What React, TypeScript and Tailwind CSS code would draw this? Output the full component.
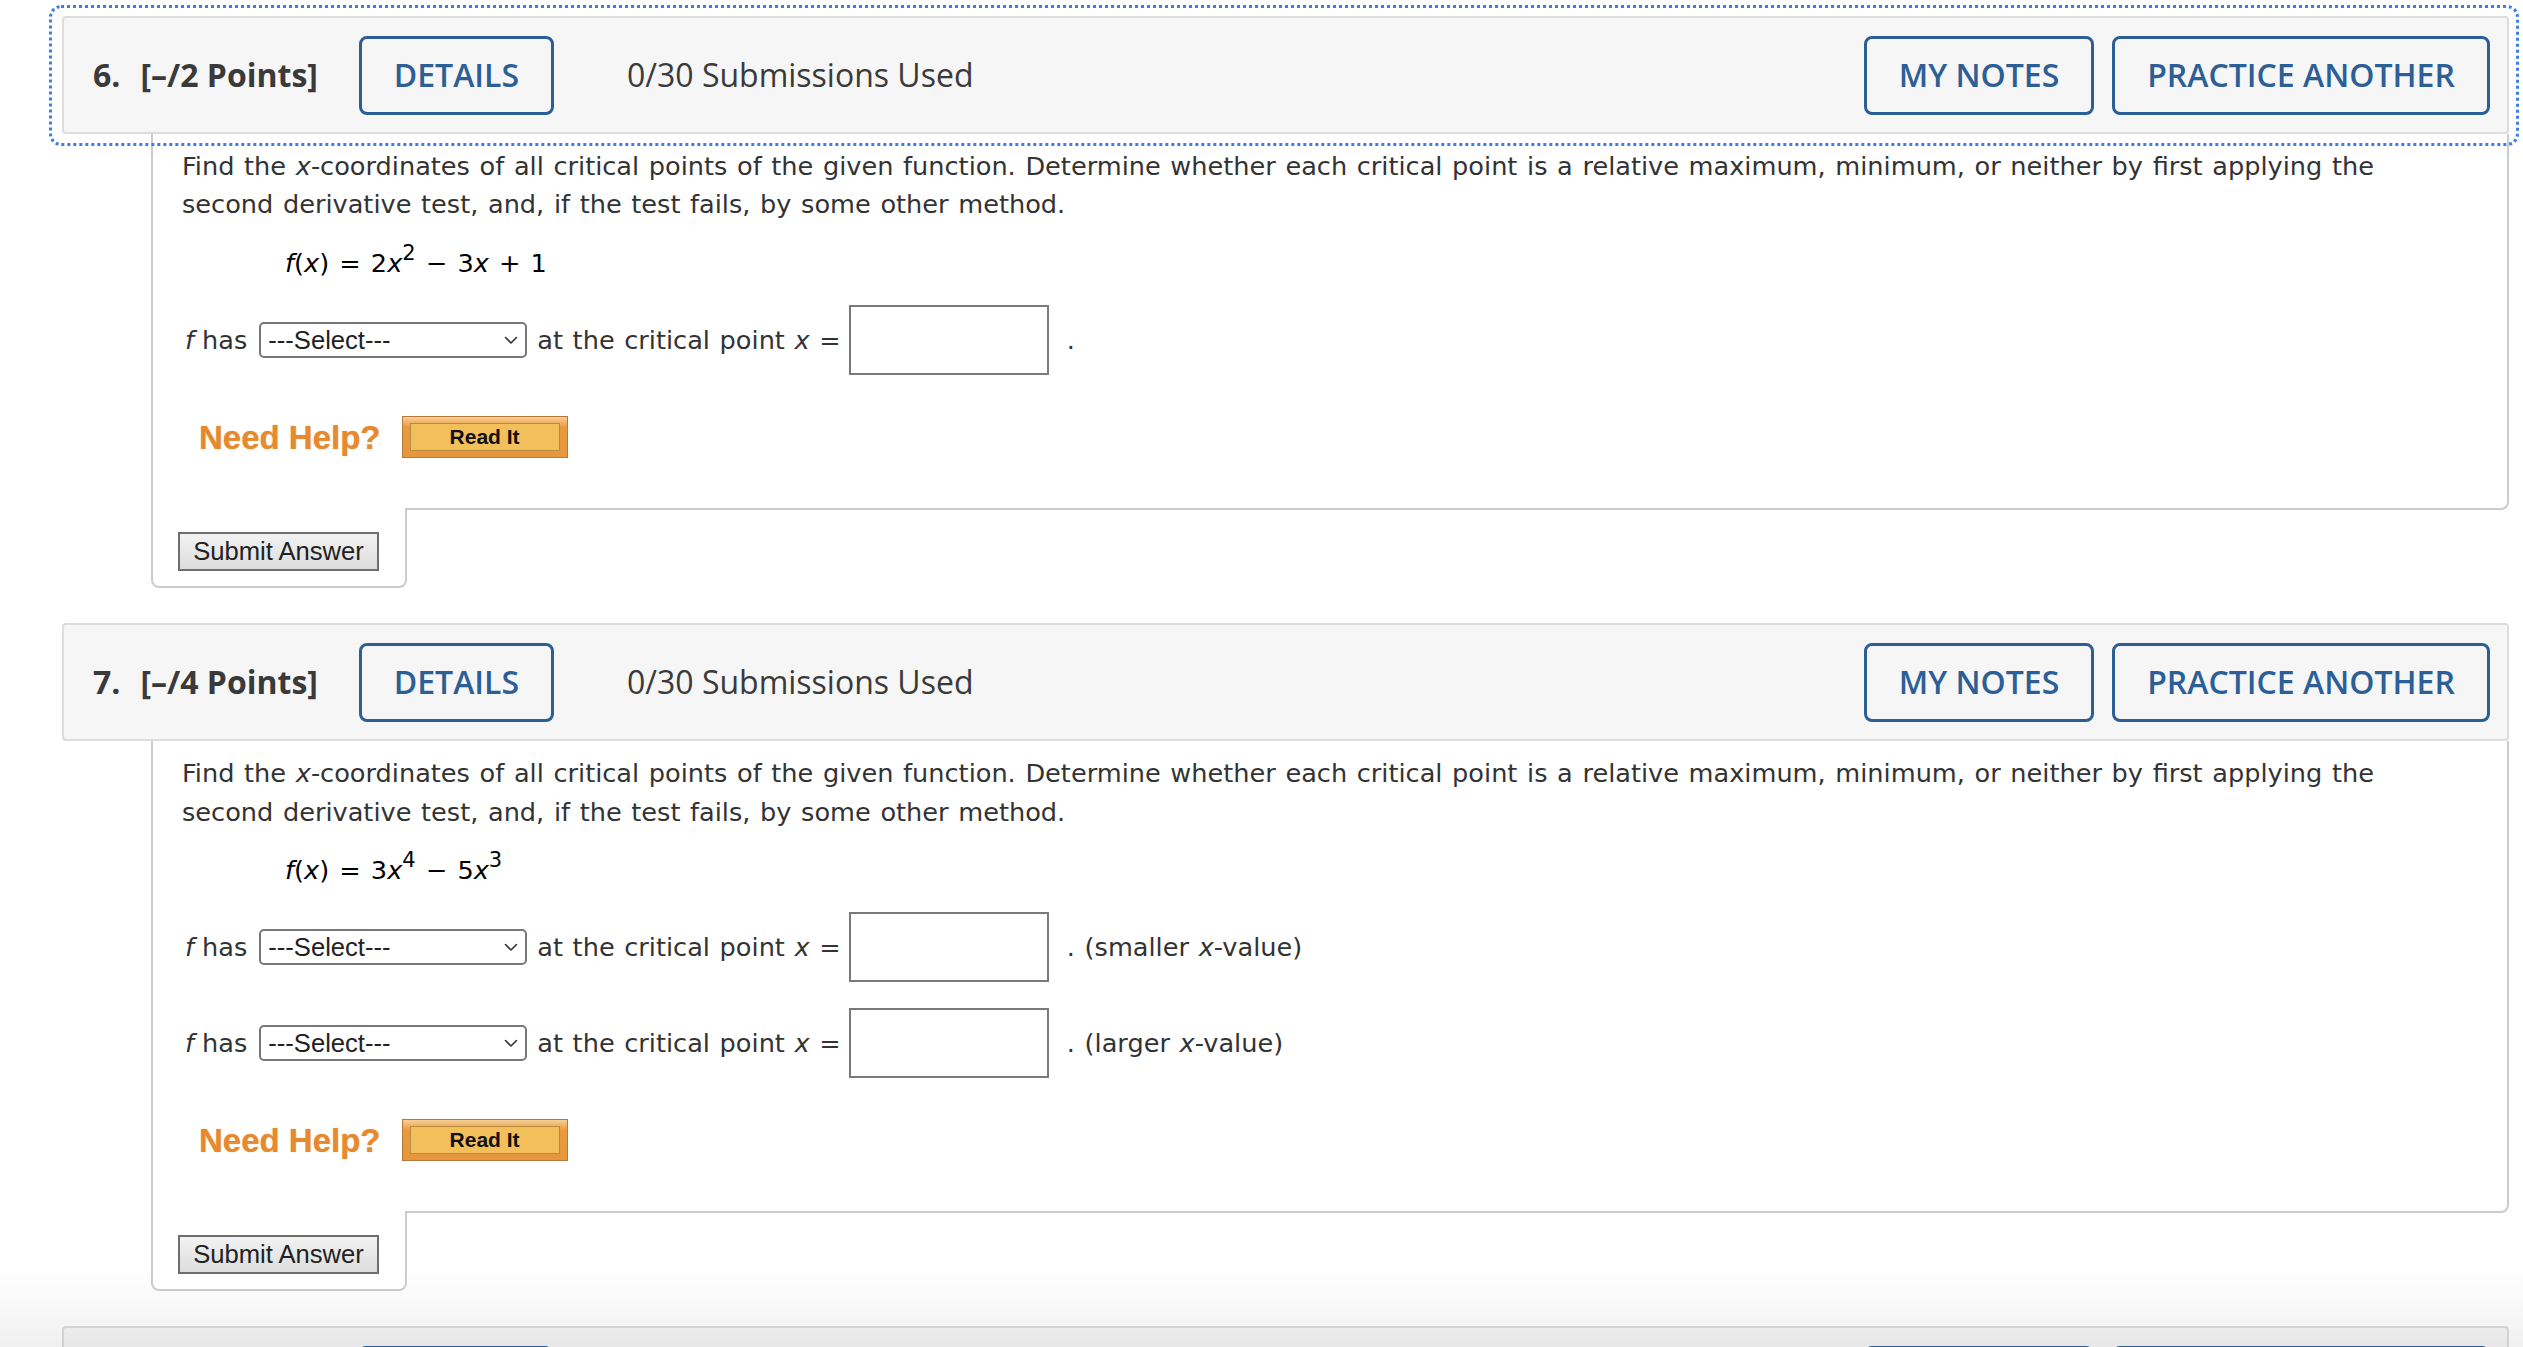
import React from 'react';

interface HeaderProps {
  num?: number;
  points?: number;
  focused?: boolean;
  blank?: boolean;
}

function QuestionHeader({ num, points, focused, blank }: HeaderProps) {
  return (
    <div className="relative">
      {focused && (
        <div className="pointer-events-none absolute -left-[13px] -top-[11px] -right-[10px] -bottom-[12px] rounded-[12px] border-[3px] border-dotted border-[#3b7fe3]" />
      )}
      <div className="flex h-[118px] items-center rounded-[4px] border-2 border-[#dddddd] bg-[#f6f6f6] pl-[29px] pr-[17px] font-['Open_Sans',sans-serif] text-[32px] text-[#3a3a3a]">
        {blank ? (
          <div className="ml-[265px] h-[79px] w-[195px] rounded-[8px] border-[3px] border-[#2c5f96]" />
        ) : (
          <>
            <span className="font-bold">{num}.</span>
            <span className="ml-[20px] font-bold">[–/{points} Points]</span>
            <button className="ml-[41px] h-[79px] w-[195px] rounded-[8px] border-[3px] border-[#2c5f96] font-semibold text-[#2c5f96]">
              DETAILS
            </button>
            <span className="ml-[73px]">0/30 Submissions Used</span>
          </>
        )}
        <div className="ml-auto flex gap-[18px]">
          <button className="h-[79px] w-[230px] rounded-[8px] border-[3px] border-[#2c5f96] font-semibold text-[#2c5f96]">
            {blank ? '' : 'MY NOTES'}
          </button>
          <button className="h-[79px] w-[378px] rounded-[8px] border-[3px] border-[#2c5f96] font-semibold text-[#2c5f96]">
            {blank ? '' : 'PRACTICE ANOTHER'}
          </button>
        </div>
      </div>
    </div>
  );
}

function SelectBox() {
  return (
    <div className="ml-[12px] flex h-[36px] w-[268px] items-center justify-between rounded-[5px] border-2 border-[#777777] bg-white pl-[7px] pr-[7px] font-['Liberation_Sans',Arial,sans-serif] text-[25.6px] text-[#222] [word-spacing:0]">
      <span>---Select---</span>
      <svg width="14" height="9" viewBox="0 0 14 9" fill="none">
        <path d="M1.5 1.5 L7 7 L12.5 1.5" stroke="#333" strokeWidth="1.6" strokeLinecap="round" strokeLinejoin="round" />
      </svg>
    </div>
  );
}

function AnswerRow({ note, className }: { note?: React.ReactNode; className?: string }) {
  return (
    <div className={`flex h-[70px] items-center ${className ?? ''}`}>
      <span className="ml-[3px] italic">f</span>
      <span className="ml-[8px]">has</span>
      <SelectBox />
      <span className="ml-[10px]">
        at the critical point <span className="italic">x</span> =
      </span>
      <div className="ml-[8px] h-[70px] w-[200px] border-2 border-[#7a7a7a] bg-white" />
      <span className="ml-[18px]">
        .{note && <> {note}</>}
      </span>
    </div>
  );
}

function NeedHelp() {
  return (
    <div className="mt-[41px] flex items-center pl-[17px]">
      <span className="font-['Liberation_Sans',Arial,sans-serif] text-[33px] font-bold leading-none text-[#e6892f] [text-shadow:0_0_1px_#eeaa66] [word-spacing:0]">
        Need Help?
      </span>
      <div className="ml-[21px] h-[42px] w-[166px] border border-[#b8783a] bg-[linear-gradient(to_bottom,#f8cf98_0%,#e99a3f_25%,#e6963c_100%)] px-[7px] py-[6px]">
        <div className="flex h-full items-center justify-center border border-[#b98a3f] bg-[#f3bf5b] font-['Liberation_Sans',Arial,sans-serif] text-[21px] font-bold text-[#111] [word-spacing:0]">
          Read It
        </div>
      </div>
    </div>
  );
}

interface QuestionProps {
  num: number;
  points: number;
  focused?: boolean;
  math: React.ReactNode;
  rows: React.ReactNode;
}

function Question({ num, points, focused, math, rows }: QuestionProps) {
  return (
    <div className="mb-[35px]">
      <QuestionHeader num={num} points={points} focused={focused} />
      <div className="ml-[89px]">
        <div className="rounded-br-[8px] border-x-2 border-b-2 border-[#cccccc] pb-[50px] pl-[29px] pt-[13px] font-['DejaVu_Sans',Verdana,sans-serif] text-[25.6px] leading-[38.4px] text-[#333] [word-spacing:1.5px]">
          <p>
            Find the <span className="italic">x</span>-coordinates of all critical points of the given function. Determine
            whether each critical point is a relative maximum, minimum, or neither by first applying the
            <br />
            second derivative test, and, if the test fails, by some other method.
          </p>
          <div className="mt-[20px] pl-[103px] text-black [word-spacing:2px]">{math}</div>
          {rows}
          <NeedHelp />
        </div>
        <div className="relative z-10 -mt-[2px] w-[256px] rounded-b-[8px] border-x-2 border-b-2 border-[#cccccc] bg-white pb-[15px] pl-[25px] pt-[24px]">
          <button className="h-[39px] w-[201px] border-2 border-[#6e6e6e] bg-[linear-gradient(to_bottom,#f2f2f2,#dddddd)] font-['Liberation_Sans',Arial,sans-serif] text-[25.6px] leading-none text-[#222]">
            Submit Answer
          </button>
        </div>
      </div>
    </div>
  );
}

function Sup({ children }: { children: React.ReactNode }) {
  return <span className="relative -top-[12px] text-[21px]">{children}</span>;
}

export default function App() {
  return (
    <div className="relative h-[1347px] overflow-hidden bg-white pl-[62px] pr-[14px] pt-[16px]">
      <Question
        num={6}
        points={2}
        focused
        math={
          <>
            <span className="italic">f</span>(<span className="italic">x</span>) = 2<span className="italic">x</span>
            <Sup>2</Sup> − 3<span className="italic">x</span> + 1
          </>
        }
        rows={<AnswerRow className="mt-[21px]" />}
      />
      <Question
        num={7}
        points={4}
        math={
          <>
            <span className="italic">f</span>(<span className="italic">x</span>) = 3<span className="italic">x</span>
            <Sup>4</Sup> − 5<span className="italic">x</span>
            <Sup>3</Sup>
          </>
        }
        rows={
          <>
            <AnswerRow
              className="mt-[21px]"
              note={
                <>
                  (smaller <span className="italic">x</span>-value)
                </>
              }
            />
            <AnswerRow
              className="mt-[26px]"
              note={
                <>
                  (larger <span className="italic">x</span>-value)
                </>
              }
            />
          </>
        }
      />
      <QuestionHeader blank />
      <div className="pointer-events-none absolute inset-x-0 bottom-0 h-[80px] bg-[linear-gradient(to_bottom,rgba(0,0,0,0),rgba(0,0,0,0.06))]" />
    </div>
  );
}
